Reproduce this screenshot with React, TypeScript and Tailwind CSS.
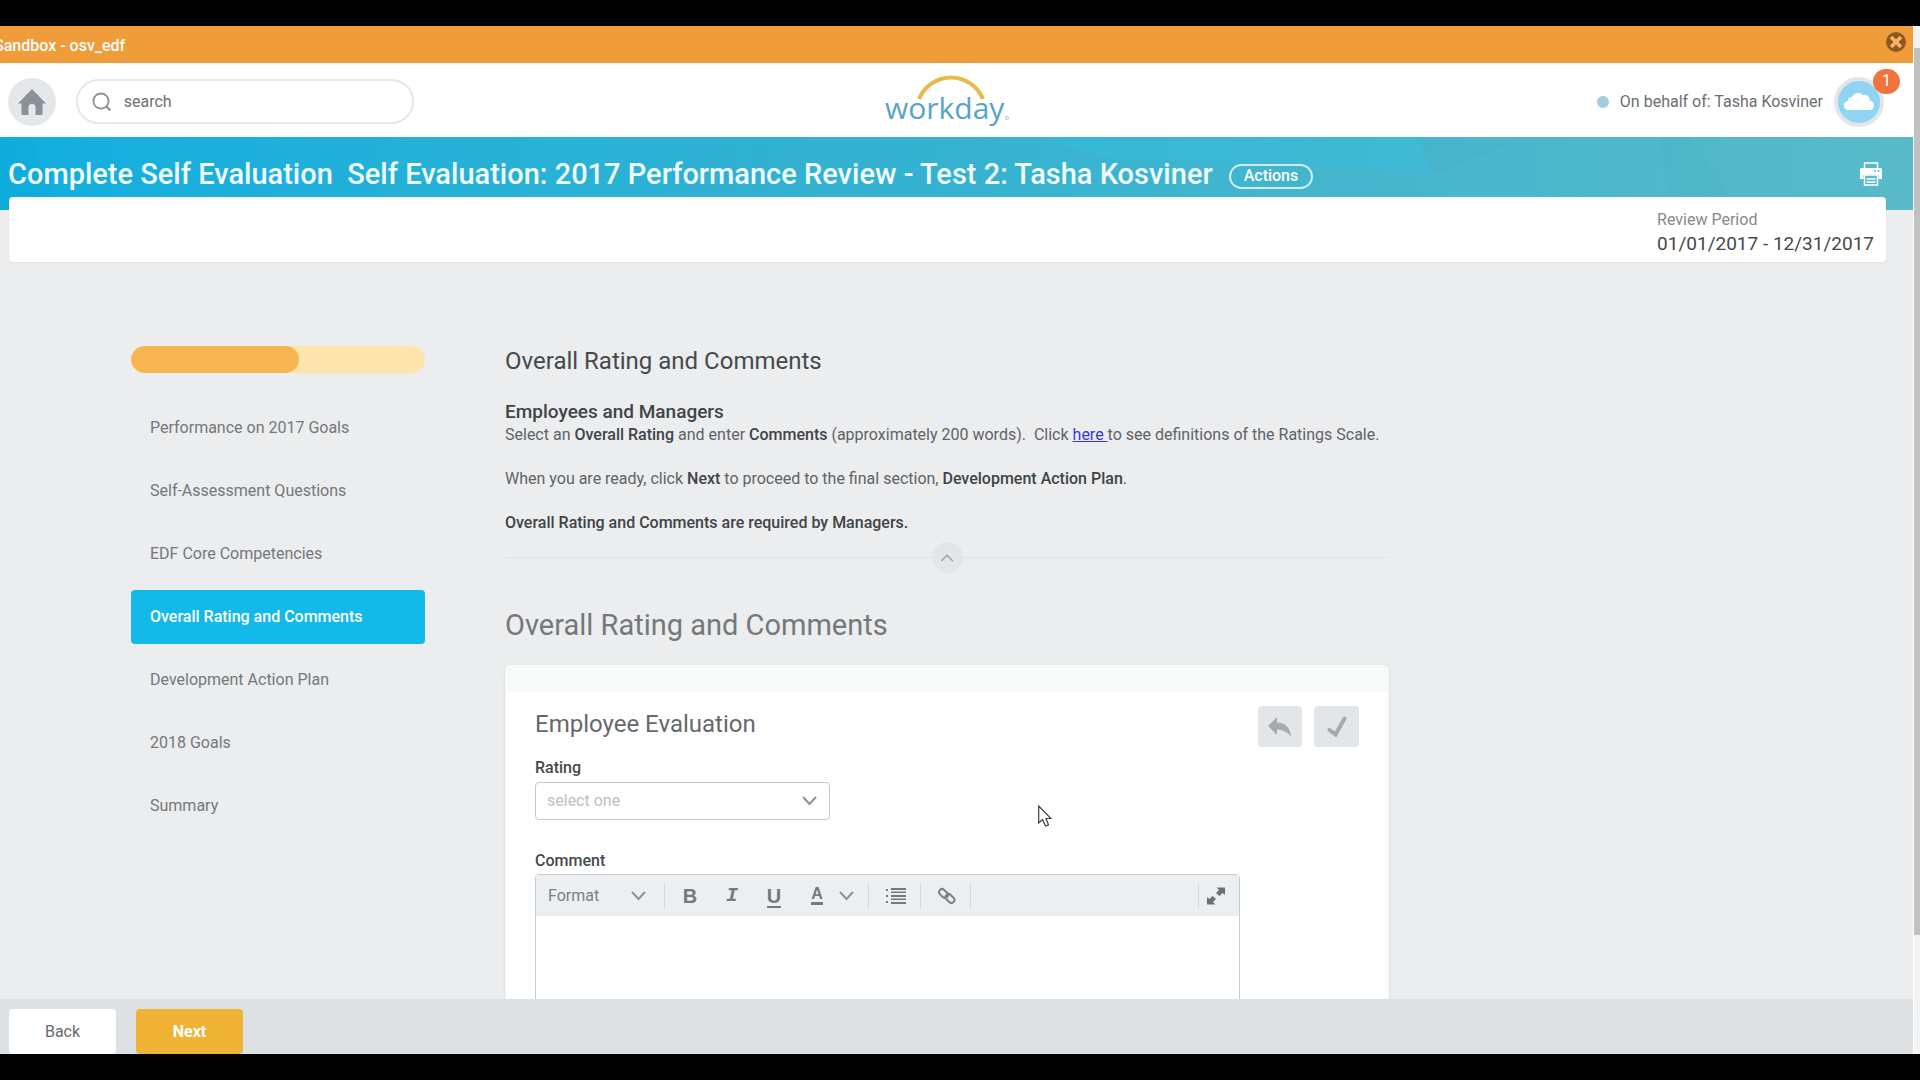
import { ChevronUp } from 'lucide-react'

const steps = [
  'Performance on 2017 Goals',
  'Self-Assessment Questions',
  'EDF Core Competencies',
  'Overall Rating and Comments',
  'Development Action Plan',
  '2018 Goals',
  'Summary',
]
const activeStep = 3
const progress = 57

function HomeIcon() {
  return (
    <svg viewBox="0 0 28 26" className="h-[26px] w-7 fill-[#8a9199]">
      <path d="M14 0 L28 14.5 H24.5 V25 Q24.5 26 23.5 26 H17.5 V18 Q17.5 15 14 15 Q10.5 15 10.5 18 V26 H4.5 Q3.5 26 3.5 25 V14.5 H0 Z" />
    </svg>
  )
}

function SearchIcon() {
  return (
    <svg viewBox="0 0 22 22" className="h-[22px] w-[22px] fill-none stroke-[#8a9094]" strokeWidth="2">
      <circle cx="10" cy="10" r="8.5" />
      <path d="M15.5 15.5 L20.5 20.5" strokeWidth="2.4" />
    </svg>
  )
}

function WorkdayLogo() {
  return (
    <svg viewBox="0 0 126 54" className="h-[54px] w-[126px]" role="img" aria-label="workday">
      <path d="M36 24 A34.5 34.5 0 0 1 100 24" fill="none" stroke="#e9b949" strokeWidth="4" />
      <text x="2" y="44" fontFamily='"Open Sans", sans-serif' fontSize="30" fill="#57a4c9">
        workday
      </text>
      <circle cx="124" cy="43" r="1.5" fill="none" stroke="#9cc8de" strokeWidth="1" />
    </svg>
  )
}

function CloudIcon() {
  return (
    <svg viewBox="0 0 30 17" className="h-[17px] w-[30px] fill-white">
      <path d="M5 17 Q0 17 0 12.5 Q0 8.5 4 8 Q4 4 8 4 Q10 0 14.5 0 Q17 0 19 2 Q25 1 26 7.5 Q30 8.5 30 12.5 Q30 17 25 17 Z" />
    </svg>
  )
}

function PrinterIcon() {
  return (
    <svg viewBox="0 0 22 24" className="h-6 w-[22px]">
      <path d="M4.5 6 V1 H17.5 V6" fill="none" stroke="#fff" strokeWidth="1.5" />
      <path d="M1.5 6 H20.5 Q22 6 22 7.5 V17 H18.5 V12.5 H3.5 V17 H0 V7.5 Q0 6 1.5 6 Z" fill="#fff" />
      <path d="M4.5 13 H17.5 V23 H4.5 Z" fill="#57bac9" stroke="#fff" strokeWidth="1.5" />
      <path d="M6.5 17 H15.5 M6.5 20 H15.5" stroke="#fff" strokeWidth="1.5" />
      <circle cx="15" cy="9" r="1" fill="#57bac9" />
      <circle cx="18.5" cy="9" r="1" fill="#57bac9" />
    </svg>
  )
}

function ListIcon() {
  return (
    <svg viewBox="0 0 20 16" className="h-4 w-5 fill-[#74797c]">
      <path d="M0 1h2v2h-2z M0 7h2v2h-2z M0 13h2v2h-2z M5 0h15v2h-15z M5 3.5h15v1.5h-15z M5 7h15v2h-15z M5 10.5h15v1.5h-15z M5 14h15v2h-15z" />
    </svg>
  )
}

function LinkIcon() {
  return (
    <svg viewBox="0 0 18 18" className="h-[18px] w-[18px] fill-none stroke-[#7c8184]" strokeWidth="2">
      <rect x="0.5" y="3.5" width="10" height="6" rx="3" transform="rotate(45 5.5 6.5)" />
      <rect x="7" y="8.5" width="10" height="6" rx="3" transform="rotate(45 12 11.5)" />
    </svg>
  )
}

function ExpandIcon() {
  return (
    <svg viewBox="0 0 18 18" className="h-[18px] w-[18px] fill-[#6c7073]">
      <path d="M9.5 0.5 H18 V8 L15.5 6 L12.5 9 L9 6 L12 3 Z" />
      <path d="M8.5 17.5 H0 V10 L2.5 12 L5.5 9 L9 12 L6 15 Z" />
    </svg>
  )
}

function DownArrow() {
  return (
    <svg viewBox="0 0 15 10" className="h-2.5 w-[15px] fill-none stroke-[#8d9295]" strokeWidth="2">
      <path d="M1 1 L7.5 8 L14 1" />
    </svg>
  )
}

function Separator() {
  return <span className="h-6 w-px bg-[#d3d8dc]" />
}

function TopBar() {
  return (
    <header className="flex h-[74px] shrink-0 items-center bg-white pt-[3px]">
      <div className="flex flex-1 items-center gap-5 pl-2">
        <button aria-label="Home" className="flex h-12 w-12 items-center justify-center rounded-full bg-[#e5e8eb]">
          <HomeIcon />
        </button>
        <label className="flex h-[45px] w-[338px] items-center gap-3 rounded-full border-2 border-[#e5e7e9] px-3.5">
          <SearchIcon />
          <input type="search" aria-label="search" placeholder="search" className="w-full text-base outline-none placeholder:text-[#6c7073]" />
        </label>
      </div>
      <WorkdayLogo />
      <div className="flex flex-1 items-center justify-end gap-[11px] pr-[29px]">
        <span className="h-3 w-3 rounded-full bg-[#a5cbe0]" />
        <span className="text-base text-[#6a6e71]">On behalf of: Tasha Kosviner</span>
        <button aria-label="Account" className="relative flex h-[50px] w-[50px] items-center justify-center rounded-full border-4 border-[#e2e5ea] bg-[#8fd4f2]">
          <CloudIcon />
          <span className="absolute -top-3 -right-5 flex h-[25px] w-[27px] items-center justify-center rounded-full bg-[#f0743f] text-base text-white">1</span>
        </button>
      </div>
    </header>
  )
}

function TitleBand() {
  return (
    <section className="shrink-0">
      <div className="relative h-[73px] bg-linear-to-r from-[#10aedf] via-[#34b3d1] to-[#58bac9]">
        {/* faint facets behind the title */}
        <svg viewBox="0 0 1913 73" preserveAspectRatio="none" className="absolute inset-0 h-full w-full">
          <path d="M0 0 H30 L60 73 H0 Z" fill="#0a9fd0" opacity="0.15" />
          <path d="M405 0 L370 30 L400 73 H640 L705 0 Z" fill="#2bb4d8" opacity="0.2" />
          <path d="M705 0 H1040 L980 73 H680 Z" fill="#3aaecb" opacity="0.2" />
          <path d="M1040 0 H1420 L1432 38 L1320 30 L1100 20 Z" fill="#35bede" opacity="0.4" />
          <path d="M1420 4 L1515 5 L1432 38 Z" fill="#3fa9c0" opacity="0.15" />
          <path d="M1660 0 H1690 L1740 73 H1670 Z" fill="#45adba" opacity="0.15" />
        </svg>
        <div className="relative flex h-[60px] items-center justify-between pt-3.5 pr-[31px] pl-2">
          <div className="flex items-center gap-4">
            <h1 className="text-[29px] leading-9 font-medium whitespace-pre text-[#f0fbff]">
              Complete Self Evaluation{'  '}Self Evaluation: 2017 Performance Review - Test 2: Tasha Kosviner
            </h1>
            <button className="mt-1 h-[25px] rounded-full border-2 border-white/75 px-[13px] text-base leading-5 font-medium text-white">Actions</button>
          </div>
          <button aria-label="Print">
            <PrinterIcon />
          </button>
        </div>
      </div>
      <div className="relative -mt-[13px] mr-[27px] ml-[9px] flex h-[65px] justify-end rounded-sm bg-white px-3 shadow-xs">
        <dl className="pt-[11px]">
          <dt className="text-base leading-6 text-[#85898c]">Review Period</dt>
          <dd className="text-[19px] leading-6 text-[#45494c]">01/01/2017 - 12/31/2017</dd>
        </dl>
      </div>
    </section>
  )
}

function Sidebar() {
  return (
    <aside className="w-[294px] shrink-0">
      <div className="h-[27px] overflow-hidden rounded-full bg-[#fce4ac]" role="progressbar" aria-label="Progress" aria-valuenow={progress}>
        <div className="h-full rounded-full bg-[#f9b550]" style={{ width: `${progress}%` }} />
      </div>
      <nav className="mt-7 flex flex-col gap-[9px]">
        {steps.map((step, i) => (
          <a
            key={step}
            href="#"
            className={
              i === activeStep
                ? 'flex h-[54px] items-center rounded-sm bg-[#13b9e9] px-[19px] text-base font-medium text-white'
                : 'flex h-[54px] items-center px-[19px] text-base text-[#74787b]'
            }
          >
            {step}
          </a>
        ))}
      </nav>
    </aside>
  )
}

function CommentEditor() {
  return (
    <div className="mt-px w-[705px] rounded-t-sm border border-[#c6ccd0]">
      <div className="flex h-[41px] items-center bg-[#ebeff2] pl-3 text-[#74797c]">
        <div className="relative flex w-[104px] items-center">
          <select aria-label="Format" className="w-full appearance-none text-base text-[#7b8083] outline-none">
            <option>Format</option>
          </select>
          <span className="pointer-events-none absolute right-1.5"><DownArrow /></span>
        </div>
        <span className="ml-3 flex"><Separator /></span>
        <div className="ml-2 flex items-center">
          <button aria-label="Bold" className="w-[42px] pr-3 pl-1 text-xl leading-6 font-bold [font-family:'Liberation_Sans',sans-serif]">B</button>
          <button aria-label="Italic" className="w-[42px] pr-3 pl-1 text-xl leading-6 font-bold italic [font-family:'Liberation_Mono',monospace]">I</button>
          <button aria-label="Underline" className="w-[42px] pr-3 pl-1 text-xl leading-6 font-bold [font-family:'Liberation_Sans',sans-serif]">
            <span className="inline-block border-b-2 border-current leading-5">U</span>
          </button>
          <button aria-label="Text color" className="w-9 text-base leading-4 font-bold [font-family:'Liberation_Sans',sans-serif]">
            <span className="inline-block border-b-3 border-current leading-4">A</span>
          </button>
          <button aria-label="Choose text color" className="ml-1">
            <DownArrow />
          </button>
        </div>
        <div className="ml-3.5 flex items-center">
          <Separator />
          <button aria-label="Bulleted list" className="mr-3.5 ml-[17px]"><ListIcon /></button>
          <Separator />
          <button aria-label="Insert link" className="mr-3.5 ml-[17px]"><LinkIcon /></button>
          <Separator />
        </div>
        <div className="ml-auto flex items-center gap-2 pr-3.5">
          <Separator />
          <button aria-label="Full screen"><ExpandIcon /></button>
        </div>
      </div>
      <textarea id="comment" className="block h-40 w-full resize-none bg-white p-3 text-base outline-none" />
    </div>
  )
}

function EvaluationCard() {
  return (
    <div className="mt-5 rounded-t-md bg-[#f8f9f9] pt-[27px] shadow-sm">
      <div className="mx-0.5 bg-white px-7 pt-3.5">
        <div className="flex items-start justify-between">
          <h3 className="pt-0.5 text-2xl leading-8 text-[#66696c]">Employee Evaluation</h3>
          <div className="flex gap-3">
            <button aria-label="Undo" className="flex h-[41px] w-11 items-center justify-center rounded-sm bg-[#e2e6e9]">
              <svg viewBox="0 0 24 20" className="h-5 w-6 fill-[#a3abb1]">
                <path d="M0 9 L9 0 V5.5 Q22 6 23 20 Q18 12.5 9 12.5 V18 Z" />
              </svg>
            </button>
            <button aria-label="Save" className="flex h-[41px] w-[45px] items-center justify-center rounded-sm bg-[#e2e6e9]">
              <svg viewBox="0 0 20 22" className="h-[22px] w-5 fill-none stroke-[#a3abb1]" strokeWidth="4" strokeLinecap="round">
                <path d="M2.5 14 L8.5 18.5 L17.5 2.5" />
              </svg>
            </button>
          </div>
        </div>
        <label htmlFor="rating" className="mt-[9px] block text-base leading-6 font-medium text-[#45494c]">Rating</label>
        <div className="relative mt-0.5 flex h-[38px] w-[295px] items-center rounded-sm border border-[#c4c8ca]">
          <select id="rating" className="h-full w-full appearance-none px-[11px] text-base text-[#bdc0c2] outline-none">
            <option>select one</option>
          </select>
          <span className="pointer-events-none absolute right-3"><DownArrow /></span>
        </div>
        <label htmlFor="comment" className="mt-[29px] block text-base leading-6 font-medium text-[#45494c]">Comment</label>
        <CommentEditor />
      </div>
    </div>
  )
}

function Content() {
  return (
    <main className="max-w-[884px] flex-1">
      <h2 className="text-2xl leading-[30px] text-[#45494c]">Overall Rating and Comments</h2>
      <div className="mt-[23px] text-base leading-[22px] text-[#5f6366] [&_b]:font-medium [&_b]:text-[#404447]">
        <p className="text-[19px] leading-[25px] font-medium text-[#404447]">Employees and Managers</p>
        <p className="whitespace-pre-wrap">
          Select an <b>Overall Rating</b> and enter <b>Comments</b> (approximately 200 words).{'  '}Click{' '}
          <a href="#" className="text-[#3a35d6] underline">here </a>
          to see definitions of the Ratings Scale.
        </p>
        <p className="mt-[22px]">
          When you are ready, click <b>Next</b> to proceed to the final section, <b>Development Action Plan</b>.
        </p>
        <p className="mt-[22px]"><b>Overall Rating and Comments are required by Managers.</b></p>
      </div>
      <div className="mt-2 flex items-center">
        <span className="h-px flex-1 bg-[#dfe4e7]" />
        <button aria-label="Collapse" className="flex h-[31px] w-[31px] items-center justify-center rounded-full bg-[#e1e6e9] text-[#9da3a7]">
          <ChevronUp size={22} strokeWidth={1.5} />
        </button>
        <span className="h-px flex-1 bg-[#dfe4e7]" />
      </div>
      <h2 className="mt-8 text-[29px] leading-10 text-[#74787b]">Overall Rating and Comments</h2>
      <EvaluationCard />
    </main>
  )
}

export default function App() {
  return (
    <div className="flex h-screen flex-col bg-black py-[26px] [font-family:Roboto,sans-serif]">
      <div className="flex min-h-0 flex-1 bg-[#f3f3f3]">
        <div className="flex min-w-0 flex-1 flex-col bg-[#ebedef]">
          <div className="flex h-[37px] shrink-0 items-center justify-between overflow-hidden bg-[#f19c3a] pr-[7px]">
            <p className="-ml-1.5 pt-0.5 text-base font-medium text-white">Sandbox - osv_edf</p>
            <button aria-label="Close" className="mb-1.5 flex h-5 w-5 items-center justify-center rounded-full bg-[#8e5a1c]">
              <svg viewBox="0 0 12 12" className="h-3 w-3 stroke-[#f5b469]" strokeWidth="3.5">
                <path d="M1 1 L11 11 M11 1 L1 11" />
              </svg>
            </button>
          </div>
          <TopBar />
          <TitleBand />
          <div className="flex min-h-0 flex-1 gap-20 overflow-hidden px-[131px] pt-[84px]">
            <Sidebar />
            <Content />
          </div>
          <footer className="flex h-[55px] shrink-0 items-end gap-5 bg-[#dde1e4] pl-[9px] text-base">
            <button className="h-[45px] w-[107px] rounded-sm bg-white text-[#66696c]">Back</button>
            <button className="h-[45px] w-[107px] rounded-sm bg-[#efb435] font-bold text-white">Next</button>
          </footer>
        </div>
        <div className="w-[7px] border-l border-white pt-[22px]">
          <div className="h-[887px] bg-[#c1c1c1]" />
        </div>
      </div>
      <svg viewBox="0 0 14 22" className="pointer-events-none absolute top-[805px] left-[1038px] h-[22px] w-3.5">
        <path d="M0.7 1 V18 L4.5 14.5 L7.5 21 L10.5 19.8 L8 13.5 H13 Z" fill="#fff" stroke="#3c3c46" strokeWidth="1.2" />
      </svg>
    </div>
  )
}
